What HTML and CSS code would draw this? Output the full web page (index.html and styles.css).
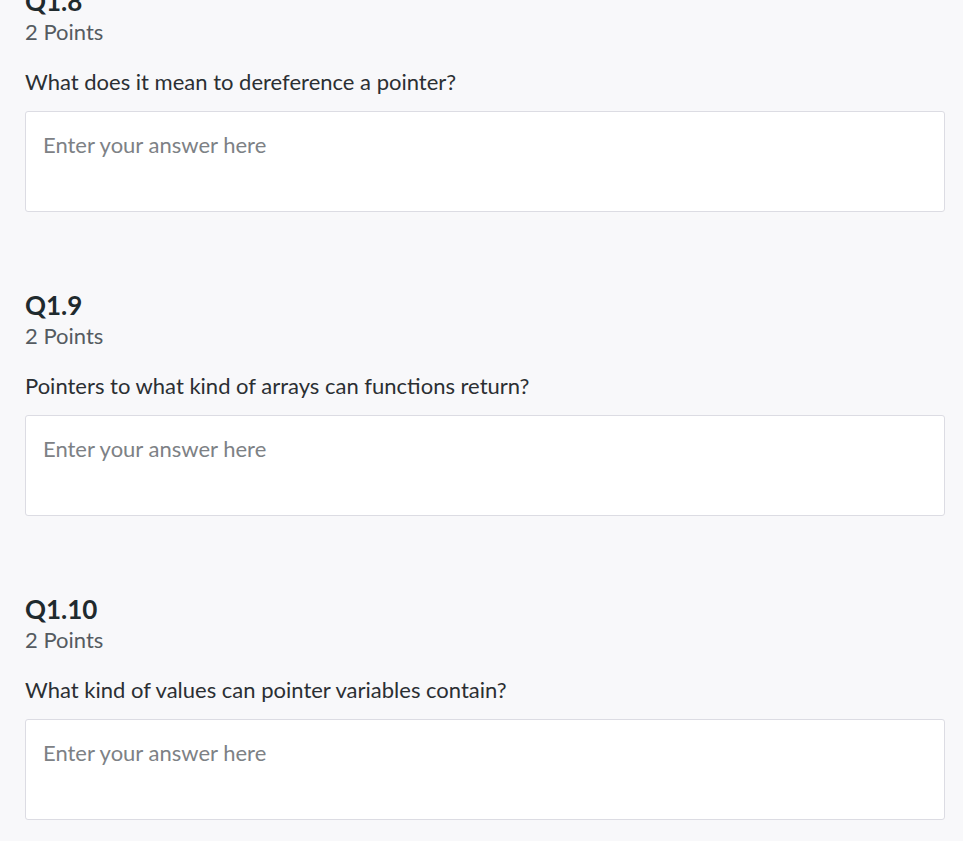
FILE: index.html
```html
<!DOCTYPE html>
<html>
<head>
<meta charset="utf-8">
<link rel="stylesheet" href="styles.css">
</head>
<body>
<main class="questions">
  <section class="question first">
    <h3 class="q-title">Q1.8</h3>
    <div class="q-points">2 Points</div>
    <p class="q-text">What does it mean to dereference a pointer?</p>
    <textarea class="q-answer" placeholder="Enter your answer here"></textarea>
  </section>
  <section class="question">
    <h3 class="q-title">Q1.9</h3>
    <div class="q-points">2 Points</div>
    <p class="q-text">Pointers to what kind of arrays can functions return?</p>
    <textarea class="q-answer" placeholder="Enter your answer here"></textarea>
  </section>
  <section class="question">
    <h3 class="q-title">Q1.10</h3>
    <div class="q-points">2 Points</div>
    <p class="q-text">What kind of values can pointer variables contain?</p>
    <textarea class="q-answer" placeholder="Enter your answer here"></textarea>
  </section>
</main>
</body>
</html>
```
FILE: styles.css
```css
html, body {
  margin: 0;
  padding: 0;
  background: #f8f8fa;
  overflow: hidden;
}
body {
  font-family: "Lato", "Liberation Sans", sans-serif;
  color: #2b2f33;
}
.questions {
  width: 920px;
  padding-left: 25px;
  margin-top: -15px;
}
.question {
  display: flex;
  flex-direction: column;
  padding-bottom: 77px;
}
.q-title {
  margin: 0;
  font-size: 26px;
  line-height: 32px;
  font-weight: 700;
  color: #1f2a2e;
}
.q-points {
  margin-top: 2px;
  font-size: 22px;
  line-height: 26px;
  color: #555b61;
}
.q-text {
  margin: 24px 0 0;
  font-size: 22px;
  line-height: 26px;
}
.q-answer {
  margin-top: 16px;
  box-sizing: border-box;
  width: 920px;
  height: 101px;
  padding: 20px 17px;
  border: 1px solid #dcdce3;
  border-radius: 3px;
  background: #fff;
  font-family: inherit;
  font-size: 22px;
  line-height: 26px;
  resize: none;
  outline: none;
}
.q-answer::placeholder {
  color: #7d8185;
}
```
